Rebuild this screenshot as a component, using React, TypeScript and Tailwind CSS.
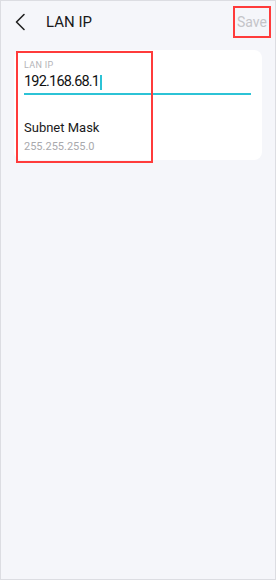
export default function App() {
  return (
    <div
      className="relative w-[276px] h-[580px] bg-[#f5f6fa] border border-[#dcdde2] overflow-hidden"
      style={{ fontFamily: 'Roboto, "Noto Sans", sans-serif' }}
    >
      {/* header */}
      <div className="flex items-center h-[42px] pl-[13px] pr-[4px]">
        <svg width="12" height="18" viewBox="0 0 12 18" fill="none" className="text-[#222]">
          <path d="M10 1.5 L2.5 9 L10 16.5" stroke="currentColor" strokeWidth="1.6" strokeLinecap="round" strokeLinejoin="round" />
        </svg>
        <span className="ml-[20px] text-[15px] text-[#1a1a1a]">LAN IP</span>
        <div className="ml-auto relative flex items-center justify-center w-[38px] h-[32px]">
          <span className="text-[14px] text-[#c4c4c8]">Save</span>
          <div className="absolute inset-0 border-2 border-[#ff3b3b]" />
        </div>
      </div>

      {/* card */}
      <div className="relative mx-[13px] mt-[7px] bg-white rounded-[8px] h-[110px] pl-[10px] pr-[11px] pt-[9px]">
        <div className="text-[9px] leading-[12px] text-[#b4b4b8] tracking-[0.3px]">LAN IP</div>
        <div className="flex items-center h-[20px] mt-[1px]">
          <span className="text-[14.5px] tracking-[-0.8px] text-[#111]">192.168.68.1</span>
          <span className="w-[1.5px] h-[15px] bg-[#2cc3d6] ml-[1px]" />
        </div>
        <div className="h-[2px] bg-[#2cc3d6] mt-[1px]" />
        <div className="mt-[25px] text-[13px] leading-[16px] text-[#1a1a1a]">Subnet Mask</div>
        <div className="mt-[4px] text-[11px] leading-[14px] text-[#a9a9ad]">255.255.255.0</div>
        <div className="absolute left-[2px] top-[1px] w-[137px] h-[112px] border-2 border-[#ff3b3b]" />
      </div>
    </div>
  )
}
